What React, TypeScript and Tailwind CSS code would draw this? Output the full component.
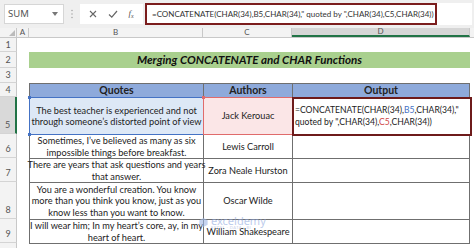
import React from "react";

const F = { fontFamily: "Lato, 'Noto Sans', sans-serif" };

function RowHdr({ h, label, sel, end }: { h: number; label?: string; sel?: boolean; end?: boolean }) {
  return (
    <div
      className={`flex justify-center border-b border-[#d4d4d4] text-[9px] text-[#555] leading-[12px] ${end ? "items-end pb-[2px]" : "items-center"} ${sel ? "bg-[#d9d9d9] border-r-2 border-r-[#217346]" : "bg-[#f3f3f3] border-r border-r-[#c8c8c8]"}`}
      style={{ height: h }}
    >
      {label}
    </div>
  );
}

function Cell({ w, h, children, cls = "" }: { w: number; h: number; children?: React.ReactNode; cls?: string }) {
  return (
    <div
      className={`flex items-center justify-center text-center border-r border-b border-[#6f6f6f] text-[9.2px] leading-[11.5px] text-[#222] ${cls}`}
      style={{ width: w, height: h }}
    >
      {children}
    </div>
  );
}

export default function App() {
  const rows = [
    { h: 24, q: ["Sometimes, I’ve believed as many as six", "impossible things before breakfast."], a: "Lewis Carroll" },
    { h: 24, q: ["There are years that ask questions and years", "that answer."], a: "Zora Neale Hurston" },
    { h: 37, q: ["You are a wonderful creation. You know", "more than you think you know, just as you", "know less than you want to know."], a: "Oscar Wilde" },
    { h: 24, q: ["I will wear him; In my heart’s core, ay, in my", "heart of heart."], a: "William Shakespeare" },
  ];
  return (
    <div className="w-[474px] h-[248px] overflow-hidden bg-white relative" style={F}>
      {/* formula bar */}
      <div className="h-[28px] bg-[#efefef] flex items-center">
        <div className="ml-[4px] w-[60px] h-[20px] bg-white border border-[#d6d6d6] flex items-center justify-between pl-[3px] pr-[5px]">
          <span className="text-[9.5px] text-[#555]" style={{ fontFamily: "'Noto Sans', sans-serif" }}>SUM</span>
          <svg width="6" height="4" viewBox="0 0 6 4"><path d="M0 0h6L3 4z" fill="#777" /></svg>
        </div>
        <div className="w-[16px] flex justify-center">
          <svg width="2" height="10" viewBox="0 0 2 10"><circle cx="1" cy="1.5" r="0.8" fill="#aaa" /><circle cx="1" cy="5" r="0.8" fill="#aaa" /><circle cx="1" cy="8.5" r="0.8" fill="#aaa" /></svg>
        </div>
        <div className="w-[63px] h-[20px] bg-white flex items-center justify-around px-[4px]">
          <svg width="8" height="8" viewBox="0 0 8 8"><path d="M1 1l6 6M7 1L1 7" stroke="#666" strokeWidth="1.1" /></svg>
          <svg width="10" height="8" viewBox="0 0 10 8"><path d="M1 4.5l2.8 2.6L9 1" stroke="#666" strokeWidth="1.2" fill="none" /></svg>
          <span className="text-[9px] italic text-[#555]" style={{ fontFamily: "'Liberation Serif', serif" }}>f<sub className="text-[6px]">x</sub></span>
        </div>
        <div className="ml-[2px] flex-1 h-[22px] bg-white mr-[2px] flex items-center">
          <div className="w-[292px] h-[22px] border-2 border-[#7b1d1d] flex items-center pl-[5px] text-[8px] text-[#333] whitespace-nowrap">
            =CONCATENATE(CHAR(34),B5,CHAR(34),"&nbsp;quoted by ",CHAR(34),C5,CHAR(34))
          </div>
        </div>
      </div>
      {/* column headers */}
      <div className="h-[10px] flex bg-[#f3f3f3] border-b border-[#c8c8c8] text-[8px] leading-[9px] text-[#555]">
        <div className="w-[17px] border-r border-[#c8c8c8] flex items-end justify-end pr-[1px] pb-[1px]">
          <svg width="6" height="6" viewBox="0 0 6 6"><path d="M6 0v6H0z" fill="#bbb" /></svg>
        </div>
        <div className="w-[12px] border-r border-[#c8c8c8] flex items-center justify-center">A</div>
        <div className="w-[174px] border-r border-[#c8c8c8] flex items-center justify-center">B</div>
        <div className="w-[89px] border-r border-[#c8c8c8] flex items-center justify-center">C</div>
        <div className="w-[178px] bg-[#d6d6d6] border-b-2 border-[#217346] border-r border-r-[#c8c8c8] flex items-center justify-center">D</div>
        <div className="flex-1" />
      </div>
      {/* body */}
      <div className="flex">
        <div className="w-[17px] flex flex-col">
          <RowHdr h={14} label="1" />
          <RowHdr h={16} label="2" />
          <RowHdr h={15} label="3" />
          <RowHdr h={14} label="4" />
          <RowHdr h={37} label="5" sel end />
          <RowHdr h={24} label="6" end />
          <RowHdr h={24} label="7" end />
          <RowHdr h={37} label="8" end />
          <RowHdr h={24} label="9" end />
          <RowHdr h={20} />
        </div>
        <div className="w-[12px]" />
        <div className="w-[441px] flex flex-col">
          <div className="h-[14px]" />
          <div className="h-[16px] bg-[#a9d08e] flex items-center justify-center text-[11.6px] font-bold italic text-[#111]">
            Merging CONCATENATE and CHAR Functions
          </div>
          <div className="h-[15px]" />
          {/* table */}
          <div className="flex flex-col border-l border-t border-[#6f6f6f]">
            <div className="flex bg-[#8eaadb]">
              <Cell w={174} h={14} cls="font-bold text-[10.5px] text-[#111]">Quotes</Cell>
              <Cell w={89} h={14} cls="font-bold text-[10.5px] text-[#111]">Authors</Cell>
              <Cell w={177} h={14} cls="font-bold text-[10.5px] text-[#111]">Output</Cell>
            </div>
            <div className="flex relative">
              <Cell w={174} h={37} cls="bg-[#dde8f6]">
                <div>The best teacher is experienced and not<br />through someone’s distorted point of view</div>
              </Cell>
              <Cell w={89} h={37} cls="bg-[#fbe6e7]">Jack Kerouac</Cell>
              <div className="w-[177px] h-[37px] border-b border-[#6f6f6f]" />
              {/* reference outlines */}
              <div className="absolute -left-px -top-px w-[175px] h-[38px] border border-[#4472c4] pointer-events-none" />
              <div className="absolute left-[173px] -top-px w-[90px] h-[38px] border border-[#e06b6b] pointer-events-none" />
              <div className="absolute left-[262px] -top-px w-[180px] h-[39px] border-[2.5px] border-[#6e1b1b] bg-white text-[8.6px] leading-[11.5px] text-[#222] pl-[1px] pt-[6px] whitespace-nowrap">
                <div>=CONCATENATE(CHAR(34),<span className="text-[#4472c4]">B5</span>,CHAR(34),"</div>
                <div>quoted by ",CHAR(34),<span className="text-[#d04545]">C5</span>,CHAR(34))</div>
              </div>
              <div className="absolute -left-[2px] -top-[2px] w-[3px] h-[3px] bg-[#4472c4]" />
              <div className="absolute -left-[2px] top-[35px] w-[3px] h-[3px] bg-[#4472c4]" />
              <div className="absolute left-[172px] -top-[2px] w-[3px] h-[3px] bg-[#e06b6b]" />
            </div>
            {rows.map((r, i) => (
              <div className="flex" key={i}>
                <Cell w={174} h={r.h}>
                  <div>{r.q.map((l, j) => (<div key={j} className="whitespace-nowrap">{l}</div>))}</div>
                </Cell>
                <Cell w={89} h={r.h}>{r.a}</Cell>
                <Cell w={177} h={r.h} />
              </div>
            ))}
          </div>
        </div>
      </div>
      {/* watermark */}
      <div className="absolute left-[198px] top-[215px] flex items-center gap-[2px] opacity-60 pointer-events-none">
        <svg width="11" height="11" viewBox="0 0 12 12"><path d="M6 1l4.5 2.5v5L6 11 1.5 8.5v-5z" fill="#9fb7e6" /></svg>
        <div className="flex flex-col leading-none">
          <span className="text-[11px] text-[#8fa9e0]" style={{ fontFamily: "'Noto Sans', sans-serif" }}>exceldemy</span>
          <span className="text-[4px] text-[#9fb0d8] tracking-[0.5px]">EXCEL · DATA · BI</span>
        </div>
      </div>
    </div>
  );
}
